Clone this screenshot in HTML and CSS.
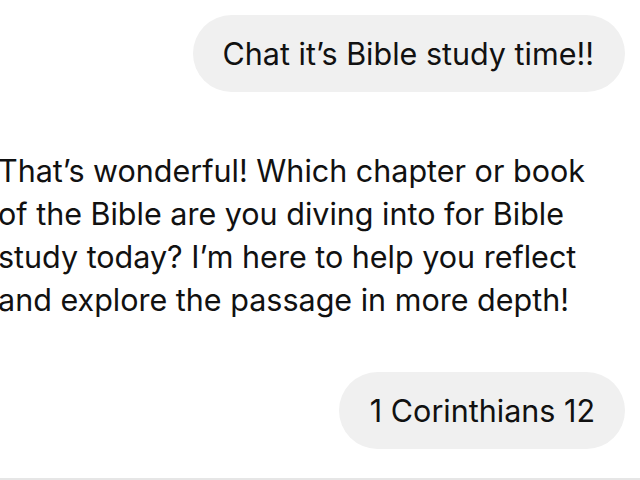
FILE: index.html
```html
<!DOCTYPE html>
<html>
<head>
<meta charset="utf-8">
<link rel="stylesheet" href="styles.css">
</head>
<body>
<div class="chat">
  <div class="row user"><div class="bubble">Chat it’s Bible study time!!</div></div>
  <p class="reply">That’s wonderful! Which chapter or book of the Bible are you diving into for Bible study today? I’m here to help you reflect and explore the passage in more depth!</p>
  <div class="row user"><div class="bubble second">1 Corinthians 12</div></div>
</div>
</body>
</html>
```
FILE: styles.css
```css
html, body {
  margin: 0;
  padding: 0;
  background: #ffffff;
  width: 640px;
  height: 480px;
  overflow: hidden;
}
body {
  font-family: Inter, "Noto Sans", sans-serif;
  color: #111111;
  border-bottom: 2px solid #e6e6e6;
  box-sizing: border-box;
}
.chat {
  display: flex;
  flex-direction: column;
  padding-top: 15px;
}
.row {
  display: flex;
  justify-content: flex-end;
  padding-right: 15px;
}
.bubble {
  background: #f0f0f0;
  border-radius: 39px;
  font-size: 30.5px;
  line-height: 36px;
  padding: 21px 31px 20px 30px;
}
.second {
  padding-left: 31px;
  padding-right: 30px;
}
.reply {
  margin: 57px 40px 0 -2px;
  font-size: 30.5px;
  line-height: 43px;
}
.chat .row:last-child {
  margin-top: 51px;
}
```
